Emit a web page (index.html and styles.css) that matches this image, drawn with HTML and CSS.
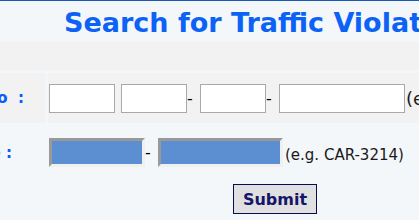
FILE: index.html
```html
<!DOCTYPE html>
<html lang="en">
<head>
    <meta charset="UTF-8">
    <title>Search for Traffic Violations</title>
    <link rel="stylesheet" href="styles.css">
</head>
<body>

    <div class="header">
        <h1 class="title">Search for Traffic Violations</h1>
    </div>
    <div class="band"></div>

    <form class="search-form" onsubmit="return false;">
        <div class="label label-reg">Vehicle No&nbsp; :</div>
        <div class="field">
            <input type="text" class="part part-first" maxlength="2">
            <input type="text" class="part" maxlength="2">
            <span class="dash">-</span>
            <input type="text" class="part" maxlength="2">
            <span class="dash">-</span>
            <input type="text" class="part-wide" maxlength="4">
            <span class="hint hint-big">(e.g. MH-12-AB-1234)</span>
        </div>

        <div class="label label-plate plain">Plate :</div>
        <div class="field plain">
            <select class="pick pick-short"><option></option></select>
            <span class="dash">-</span>
            <select class="pick pick-long"><option></option></select>
            <span class="hint">(e.g. CAR-3214)</span>
        </div>

        <div class="plain"></div>
        <div class="field-submit">
            <button type="submit" class="submit-button">Submit</button>
        </div>
    </form>

</body>
</html>
```

FILE: styles.css
```css
body {
    margin: 0;
    background: #f3f7fa;
    font-family: "DejaVu Sans", Verdana, sans-serif;
    font-size: 13px;
    overflow: hidden;
    width: 419px;
    height: 220px;
}

.header {
    border-top: 1px solid #1c5bb3;
    padding: 3px 0 0 64px;
    white-space: nowrap;
}

.title {
    margin: 0;
    font-size: 27px;
    font-weight: bold;
    line-height: 38px;
    color: #0c62f5;
}

.band {
    height: 28px;
    background: #f2f2f2;
    margin-bottom: 3px;
}

.search-form {
    display: grid;
    grid-template-columns: 45px 1fr;
    grid-template-rows: 50px 53px 40px;
    gap: 3px;
}

.label {
    display: flex;
    align-items: center;
    justify-content: flex-end;
    overflow: hidden;
    white-space: nowrap;
    background: #f2f2f2;
    color: #0a5cff;
    font-size: 15px;
    font-weight: bold;
}

.label-reg {
    padding-right: 21px;
}

.label-plate {
    padding-right: 33px;
}

.field {
    display: flex;
    align-items: center;
    padding-left: 1px;
    min-width: 0;
    white-space: nowrap;
    background: #f2f2f2;
}

.plain {
    background: none;
}

.part,
.part-wide {
    box-sizing: border-box;
    height: 29px;
    margin: 0;
    border: 1px solid #a9a9a9;
    background: #fff;
    flex-shrink: 0;
}

.part {
    width: 66px;
}

.part-first {
    margin-right: 6px;
}

.part-wide {
    width: 126px;
}

.dash {
    width: 13px;
    flex-shrink: 0;
    font-size: 16px;
    color: #000;
}

.hint {
    padding: 4px 0 0 2px;
    font-size: 15px;
    color: #1a1a1a;
    flex-shrink: 0;
}

.hint-big {
    font-size: 18px;
    padding: 0 0 0 1px;
}

.pick {
    appearance: none;
    box-sizing: border-box;
    height: 29px;
    margin: 0;
    border: 3px solid;
    border-color: #999 #f0f0f0 #f0f0f0 #999;
    background: #5c8fd1;
    flex-shrink: 0;
}

.pick-short {
    width: 96px;
}

.pick-long {
    width: 125px;
}

.field-submit {
    padding: 2px 0 0 185px;
}

.submit-button {
    box-sizing: border-box;
    width: 84px;
    height: 30px;
    padding: 0;
    border: 1px solid #0b0b55;
    background: #e0e0e0;
    color: #15156a;
    font-family: "DejaVu Sans", Verdana, sans-serif;
    font-size: 16px;
    font-weight: bold;
    cursor: pointer;
}
```
